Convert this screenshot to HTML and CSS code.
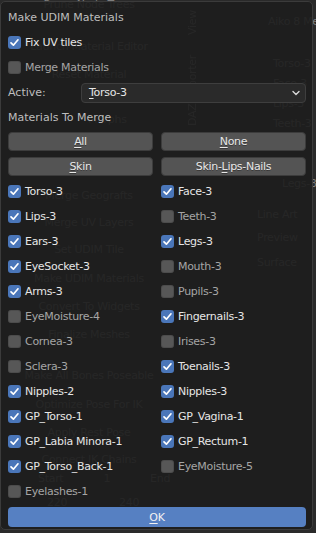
FILE: index.html
```html
<!DOCTYPE html>
<html>
<head>
<meta charset="utf-8">
<link rel="stylesheet" href="styles.css">
</head>
<body>
<div class="ghost">
  <div class="ghost-left">
    <div class="g-item g-first">Prune Node Trees</div>
    <div class="g-item g-m26">Launch Material Editor</div>
    <div class="g-item">Reset Material</div>
    <div class="g-item g-m29 g-morphs">Morphs</div>
    <div class="g-item g-m60">Merge Geografts</div>
    <div class="g-item g-m11">Merge UV Layers</div>
    <div class="g-item g-m11">Set UDIM Tile</div>
    <div class="g-item g-m13">Make UDIM Materials</div>
    <div class="g-item">Convert To Widgets</div>
    <div class="g-item">Finalize Meshes</div>
    <div class="g-item g-m25">Make All Bones Poseable</div>
    <div class="g-item g-m13">Optimize Pose For IK</div>
    <div class="g-item">Apply Rest Pose</div>
    <div class="g-item g-m11">Connect IK Chains</div>
    <div class="g-item g-m3 g-range"><span>Start</span><span>1</span><span>End</span></div>
    <div class="g-item g-m8 g-range2"><span>220</span><span>240</span></div>
  </div>
  <div class="ghost-tabs">
    <div class="g-tab">View</div>
    <div class="g-tab g-tab2">DAZ Importer</div>
  </div>
  <div class="ghost-right">
    <div class="g-line g-top">Aiko 8 Me</div>
    <div class="g-line g-list">Torso-3</div>
    <div class="g-line g-list">Face-3</div>
    <div class="g-line g-list">Lips-3</div>
    <div class="g-line g-list">Teeth-3</div>
    <div class="g-line g-legs">Legs-3</div>
    <div class="g-line g-sec1">Line Art</div>
    <div class="g-line g-sec2">Preview</div>
    <div class="g-line g-sec3">Surface</div>
  </div>
</div>

<div class="popup">
  <div class="row title">Make UDIM Materials</div>
  <div class="row check on">
    <span class="box"><svg viewBox="0 0 13 13"><path d="M3 6.8 L5.4 9.2 L10 3.8"/></svg></span>
    <span class="lbl">Fix UV tiles</span>
  </div>
  <div class="row check off">
    <span class="box"></span>
    <span class="lbl">Merge Materials</span>
  </div>
  <div class="row active-row">
    <span class="active-lbl">Active:</span>
    <div class="dropdown">
      <span><u>T</u>orso-3</span>
      <svg class="chev" viewBox="0 0 10 10"><path d="M2 3.5 L5 6.5 L8 3.5"/></svg>
    </div>
  </div>
  <div class="row title">Materials To Merge</div>

  <div class="btn-grid">
    <div class="btn"><u>A</u>ll</div>
    <div class="btn"><u>N</u>one</div>
    <div class="btn"><u>S</u>kin</div>
    <div class="btn">Skin-<u>L</u>ips-Nails</div>
  </div>

  <div class="check-grid">
    <div class="check on"><span class="box"><svg viewBox="0 0 13 13"><path d="M3 6.8 L5.4 9.2 L10 3.8"/></svg></span><span class="lbl">Torso-3</span></div>
    <div class="check on"><span class="box"><svg viewBox="0 0 13 13"><path d="M3 6.8 L5.4 9.2 L10 3.8"/></svg></span><span class="lbl">Face-3</span></div>
    <div class="check on"><span class="box"><svg viewBox="0 0 13 13"><path d="M3 6.8 L5.4 9.2 L10 3.8"/></svg></span><span class="lbl">Lips-3</span></div>
    <div class="check off"><span class="box"></span><span class="lbl">Teeth-3</span></div>
    <div class="check on"><span class="box"><svg viewBox="0 0 13 13"><path d="M3 6.8 L5.4 9.2 L10 3.8"/></svg></span><span class="lbl">Ears-3</span></div>
    <div class="check on"><span class="box"><svg viewBox="0 0 13 13"><path d="M3 6.8 L5.4 9.2 L10 3.8"/></svg></span><span class="lbl">Legs-3</span></div>
    <div class="check on"><span class="box"><svg viewBox="0 0 13 13"><path d="M3 6.8 L5.4 9.2 L10 3.8"/></svg></span><span class="lbl">EyeSocket-3</span></div>
    <div class="check off"><span class="box"></span><span class="lbl">Mouth-3</span></div>
    <div class="check on"><span class="box"><svg viewBox="0 0 13 13"><path d="M3 6.8 L5.4 9.2 L10 3.8"/></svg></span><span class="lbl">Arms-3</span></div>
    <div class="check off"><span class="box"></span><span class="lbl">Pupils-3</span></div>
    <div class="check off"><span class="box"></span><span class="lbl">EyeMoisture-4</span></div>
    <div class="check on"><span class="box"><svg viewBox="0 0 13 13"><path d="M3 6.8 L5.4 9.2 L10 3.8"/></svg></span><span class="lbl">Fingernails-3</span></div>
    <div class="check off"><span class="box"></span><span class="lbl">Cornea-3</span></div>
    <div class="check off"><span class="box"></span><span class="lbl">Irises-3</span></div>
    <div class="check off"><span class="box"></span><span class="lbl">Sclera-3</span></div>
    <div class="check on"><span class="box"><svg viewBox="0 0 13 13"><path d="M3 6.8 L5.4 9.2 L10 3.8"/></svg></span><span class="lbl">Toenails-3</span></div>
    <div class="check on"><span class="box"><svg viewBox="0 0 13 13"><path d="M3 6.8 L5.4 9.2 L10 3.8"/></svg></span><span class="lbl">Nipples-2</span></div>
    <div class="check on"><span class="box"><svg viewBox="0 0 13 13"><path d="M3 6.8 L5.4 9.2 L10 3.8"/></svg></span><span class="lbl">Nipples-3</span></div>
    <div class="check on"><span class="box"><svg viewBox="0 0 13 13"><path d="M3 6.8 L5.4 9.2 L10 3.8"/></svg></span><span class="lbl">GP_Torso-1</span></div>
    <div class="check on"><span class="box"><svg viewBox="0 0 13 13"><path d="M3 6.8 L5.4 9.2 L10 3.8"/></svg></span><span class="lbl">GP_Vagina-1</span></div>
    <div class="check on"><span class="box"><svg viewBox="0 0 13 13"><path d="M3 6.8 L5.4 9.2 L10 3.8"/></svg></span><span class="lbl">GP_Labia Minora-1</span></div>
    <div class="check on"><span class="box"><svg viewBox="0 0 13 13"><path d="M3 6.8 L5.4 9.2 L10 3.8"/></svg></span><span class="lbl">GP_Rectum-1</span></div>
    <div class="check on"><span class="box"><svg viewBox="0 0 13 13"><path d="M3 6.8 L5.4 9.2 L10 3.8"/></svg></span><span class="lbl">GP_Torso_Back-1</span></div>
    <div class="check off"><span class="box"></span><span class="lbl">EyeMoisture-5</span></div>
    <div class="check off"><span class="box"></span><span class="lbl">Eyelashes-1</span></div>
  </div>

  <div class="ok-btn"><u>O</u>K</div>
</div>
</body>
</html>
```
FILE: styles.css
```css
* { box-sizing: border-box; }
html, body {
  margin: 0;
  padding: 0;
}
body {
  width: 316px;
  height: 533px;
  overflow: hidden;
  position: relative;
  background: #2a2a2a;
  font-family: "DejaVu Sans", sans-serif;
  font-size: 11px;
  letter-spacing: -0.3px;
}

/* ---------- background (seen through the popup) ---------- */
.ghost {
  display: grid;
  grid-template-columns: 178px 26px 1fr;
  height: 533px;
  color: #7e7e7e;
}
.ghost-left {
  display: flex;
  flex-direction: column;
  align-items: center;
}
.g-item {
  height: 16px;
  line-height: 16px;
  margin-top: 12px;
  white-space: nowrap;
}
.g-first { margin-top: -3px; }
.g-m3 { margin-top: 3px; }
.g-m8 { margin-top: 8px; }
.g-m11 { margin-top: 11px; }
.g-m13 { margin-top: 13px; }
.g-m25 { margin-top: 25px; }
.g-m26 { margin-top: 26px; }
.g-m29 { margin-top: 29px; }
.g-m60 { margin-top: 60px; }
.g-morphs { align-self: flex-start; margin-left: 88px; }
.g-range {
  align-self: stretch;
  display: flex;
  padding-left: 38px;
  gap: 40px;
}
.g-range2 {
  align-self: stretch;
  display: flex;
  padding-left: 47px;
  gap: 52px;
}
.ghost-tabs {
  display: flex;
  flex-direction: column;
  align-items: center;
  padding-top: 10px;
  padding-left: 4px;
  gap: 20px;
}
.g-tab {
  writing-mode: vertical-rl;
  transform: rotate(180deg);
  line-height: 12px;
}
.ghost-right {
  display: flex;
  flex-direction: column;
  padding-top: 14px;
}
.g-line {
  height: 16px;
  line-height: 16px;
  white-space: nowrap;
}
.g-top { padding-left: 64px; margin-bottom: 26px; }
.g-list { padding-left: 69px; margin-bottom: 4px; }
.g-legs { padding-left: 78px; margin-top: 40px; }
.g-sec1 { padding-left: 53px; margin-top: 15px; }
.g-sec2 { padding-left: 53px; margin-top: 7px; }
.g-sec3 { padding-left: 53px; margin-top: 9px; }

/* ---------- popup ---------- */
.popup {
  position: absolute;
  left: 0;
  top: 1px;
  width: 313px;
  border: 1px solid #3b3b3b;
  border-radius: 5px;
  background: rgba(29, 29, 29, 0.9);
  padding: 3px 6px 2px 7px;
  color: #e4e4e4;
}
.row {
  height: 25px;
  display: flex;
  align-items: center;
}
.title {
  color: #bdbdbd;
  letter-spacing: 0;
}

.check {
  display: flex;
  align-items: center;
  gap: 4px;
  height: 25px;
  white-space: nowrap;
}
.box {
  width: 13px;
  height: 13px;
  border-radius: 3px;
  flex: none;
  display: block;
}
.box svg {
  display: block;
  width: 13px;
  height: 13px;
  fill: none;
  stroke: #ffffff;
  stroke-width: 1.7;
  stroke-linecap: round;
  stroke-linejoin: round;
}
.on .box { background: #4a76b9; }
.off .box {
  background: #575757;
  box-shadow: inset 0 0 0 1px rgba(0, 0, 0, 0.12);
}
.on .lbl { color: #e6e6e6; }
.off .lbl { color: #a5a5a5; }

.active-row { gap: 0; }
.active-lbl {
  width: 73px;
  color: #bdbdbd;
  letter-spacing: 0;
}
.dropdown {
  flex: 1;
  height: 20px;
  background: #2a2a2a;
  border: 1px solid #3e3e3e;
  border-radius: 4px;
  display: flex;
  align-items: center;
  justify-content: space-between;
  padding: 0 4px 0 7px;
  color: #e6e6e6;
}
.chev {
  width: 10px;
  height: 10px;
  fill: none;
  stroke: #d8d8d8;
  stroke-width: 1.4;
  stroke-linecap: round;
  stroke-linejoin: round;
}
u {
  text-decoration: underline;
  text-underline-offset: 2px;
  text-decoration-thickness: 1px;
}

.btn-grid {
  margin-top: 2px;
  display: grid;
  grid-template-columns: 1fr 1fr;
  column-gap: 8px;
  row-gap: 6px;
}
.btn {
  height: 19px;
  background: #545454;
  border: 1px solid #3c3c3c;
  border-radius: 4px;
  display: flex;
  align-items: center;
  justify-content: center;
  color: #e8e8e8;
  text-shadow: 0 1px 0 rgba(0, 0, 0, 0.35);
}

.check-grid {
  margin-top: 3px;
  display: grid;
  grid-template-columns: 1fr 1fr;
  column-gap: 8px;
}

.ok-btn {
  margin-top: 3px;
  height: 20px;
  background: #5680c2;
  border-radius: 4px;
  display: flex;
  align-items: center;
  justify-content: center;
  color: #f2f2f2;
}
```
